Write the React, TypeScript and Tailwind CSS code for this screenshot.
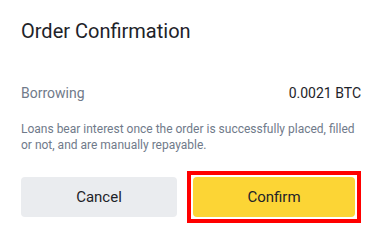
import React from "react";

export default function App() {
  return (
    <div
      className="w-[382px] h-[237px] bg-white px-[21px] flex flex-col"
      style={{ fontFamily: "Roboto, 'Noto Sans', sans-serif" }}
    >
      <div className="pt-[17px] text-[20px] leading-[28px] text-[#1e2329]">Order Confirmation</div>
      <div className="mt-[38px] flex items-center justify-between text-[14px] leading-[20px]">
        <span className="text-[#707a8a]">Borrowing</span>
        <span className="text-[#1e2329]">0.0021 BTC</span>
      </div>
      <div className="mt-[18px] text-[12px] leading-[16px] text-[#707a8a]">
        Loans bear interest once the order is successfully placed, filled or not, and are manually repayable.
      </div>
      <div className="mt-[18px] flex items-center gap-[10px]">
        <button className="w-[162px] h-[40px] rounded-[4px] bg-[#eaecef] text-[15px] font-normal text-[#1e2329]">
          Cancel
        </button>
        <div className="border-4 border-[#ff0000] p-[2px] bg-white">
          <button className="w-[162px] h-[40px] rounded-[4px] bg-[#fcd535] text-[15px] font-normal text-[#1e2329] block">
            Confirm
          </button>
        </div>
      </div>
    </div>
  );
}
